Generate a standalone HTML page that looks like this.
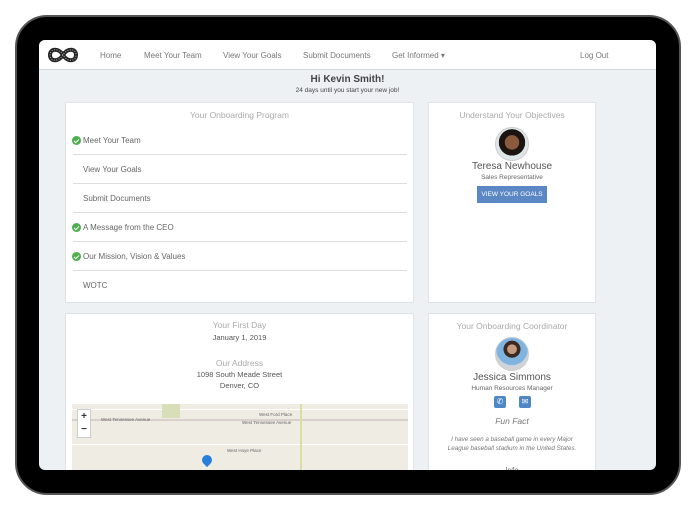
<!DOCTYPE html>
<html><head><meta charset="utf-8"><style>
*{box-sizing:border-box;margin:0;padding:0}
body{width:700px;height:511px;background:#fff;position:relative;overflow:hidden;font-family:"Liberation Sans",sans-serif;color:#555}
.frame{position:absolute;left:15px;top:15px;width:666px;height:480px;background:#000;border-radius:32px;border:2px solid #555}
.screen{position:absolute;left:39px;top:40px;width:617px;height:430px;background:#edf1f4;border-radius:6px;overflow:hidden}
.nav{position:absolute;left:0;top:0;width:617px;height:30px;background:#fff;border-bottom:1px solid #d5d8db;font-size:8px;color:#777}
.nav span{position:absolute;top:11px}
.card{position:absolute;background:#fff;border:1px solid #dfe3e6}
.t{position:absolute;width:100%;text-align:center;color:#aaa;font-size:8.5px}
.row{position:absolute;left:7px;width:334px;height:29px;border-bottom:1px solid #ddd;font-size:8px;color:#666}
.row span{position:absolute;left:10px;top:10px}
.ck{position:absolute;left:-1px;top:10px;width:9px;height:9px;border-radius:50%;background:#4cae4c}
.ck:after{content:"";position:absolute;left:3px;top:1.5px;width:2px;height:4px;border:solid #fff;border-width:0 1.5px 1.5px 0;transform:rotate(45deg)}
.c{position:absolute;width:100%;text-align:center}
</style></head><body>
<div class="frame"></div>
<div class="screen">
 <div class="nav">
  <svg style="position:absolute;left:8px;top:5px" width="32" height="20" viewBox="0 0 32 20"><path d="M16 10C12 3 3 3 3 10s9 7 13 0 13-7 13 0-9 7-13 0z" fill="none" stroke="#222" stroke-width="4"/><path d="M16 10C12 3 3 3 3 10s9 7 13 0 13-7 13 0-9 7-13 0z" fill="none" stroke="#bbb" stroke-width="1" stroke-dasharray="1 1.5"/></svg>
  <span style="left:61px">Home</span><span style="left:105px">Meet Your Team</span><span style="left:184px">View Your Goals</span><span style="left:264px">Submit Documents</span><span style="left:353px">Get Informed ▾</span><span style="left:541px">Log Out</span>
 </div>
 <div class="c" style="top:34px;font-size:10px;font-weight:bold;color:#444">Hi Kevin Smith!</div>
 <div class="c" style="top:47px;font-size:6.5px;color:#444">24 days until you start your new job!</div>

 <div class="card" style="left:26px;top:62px;width:349px;height:201px">
  <div class="t" style="top:7px">Your Onboarding Program</div>
  <div class="row" style="top:23px"><i class="ck"></i><span>Meet Your Team</span></div>
  <div class="row" style="top:52px"><span>View Your Goals</span></div>
  <div class="row" style="top:81px"><span>Submit Documents</span></div>
  <div class="row" style="top:110px"><i class="ck"></i><span>A Message from the CEO</span></div>
  <div class="row" style="top:139px"><i class="ck"></i><span>Our Mission, Vision &amp; Values</span></div>
  <div class="row" style="top:168px;border:none"><span>WOTC</span></div>
 </div>

 <div class="card" style="left:389px;top:62px;width:168px;height:201px">
  <div class="t" style="top:7px">Understand Your Objectives</div>
  <div style="position:absolute;left:66px;top:24px;width:34px;height:34px;border-radius:50%;background:radial-gradient(circle at 50% 45%,#8a5a3c 0 30%,#1c1410 31% 55%,#dfe6ea 56%);border:1px solid #ccc"></div>
  <div class="c" style="top:58px;font-size:10px;color:#555">Teresa Newhouse</div>
  <div class="c" style="top:71px;font-size:6.5px;color:#666">Sales Representative</div>
  <div style="position:absolute;left:48px;top:83px;width:70px;height:17px;background:#5b87c4;color:#fff;font-size:6.5px;text-align:center;line-height:17px">VIEW YOUR GOALS</div>
 </div>

 <div class="card" style="left:26px;top:273px;width:349px;height:170px">
  <div class="t" style="top:6px">Your First Day</div>
  <div class="c" style="top:19px;font-size:7.5px;color:#555">January 1, 2019</div>
  <div class="t" style="top:44px">Our Address</div>
  <div class="c" style="top:56px;font-size:7.5px;color:#555">1098 South Meade Street</div>
  <div class="c" style="top:67px;font-size:7.5px;color:#555">Denver, CO</div>
  <div style="position:absolute;left:6px;top:90px;width:336px;height:80px;background:#efece4;overflow:hidden">
   <div style="position:absolute;left:0;top:15px;width:336px;height:2px;background:#d9cfcc"></div>
   <div style="position:absolute;left:0;top:5px;width:336px;height:1px;background:#fff"></div>
   <div style="position:absolute;left:0;top:40px;width:336px;height:1px;background:#fff"></div>
   <div style="position:absolute;left:228px;top:0;width:2px;height:80px;background:#d7dfa4"></div>
   <div style="position:absolute;left:90px;top:0;width:18px;height:14px;background:#d8dfb8"></div>
   <div style="position:absolute;left:5px;top:5px;width:14px;height:29px;background:#fff;border:1px solid #ccc;font-size:10px;font-weight:bold;color:#333;text-align:center;line-height:13px">+<br>−</div>
   <div style="position:absolute;left:29px;top:13px;font-size:4.5px;color:#666">West Tennessee Avenue</div>
   <div style="position:absolute;left:187px;top:8px;font-size:4.5px;color:#666">West Ford Place</div>
   <div style="position:absolute;left:170px;top:16px;font-size:4.5px;color:#666">West Tennessee Avenue</div>
   <div style="position:absolute;left:155px;top:44px;font-size:4.5px;color:#666">West Hoye Place</div>
   <div style="position:absolute;left:130px;top:51px;width:10px;height:10px;border-radius:50% 50% 50% 0;transform:rotate(-45deg);background:#2a7fd8"></div>
  </div>
 </div>

 <div class="card" style="left:389px;top:273px;width:168px;height:170px">
  <div class="t" style="top:7px">Your Onboarding Coordinator</div>
  <div style="position:absolute;left:66px;top:23px;width:34px;height:34px;border-radius:50%;background:radial-gradient(circle at 50% 35%,#c49a80 0 18%,#3a2a20 19% 32%,#7fb3e0 33% 60%,#cfd4d8 61%);border:1px solid #ccc"></div>
  <div class="c" style="top:58px;font-size:10px;color:#555">Jessica Simmons</div>
  <div class="c" style="top:71px;font-size:6.5px;color:#666">Human Resources Manager</div>
  <div style="position:absolute;left:65px;top:82px;width:12px;height:12px;background:#4f86c6;border-radius:2px;color:#fff;font-size:8px;text-align:center;line-height:12px">✆</div>
  <div style="position:absolute;left:90px;top:82px;width:12px;height:12px;background:#4f86c6;border-radius:2px;color:#fff;font-size:8px;text-align:center;line-height:12px">✉</div>
  <div class="c" style="top:102px;font-size:8.5px;font-style:italic;color:#777">Fun Fact</div>
  <div class="c" style="top:121px;font-size:6.3px;font-style:italic;color:#777;line-height:9px">I have seen a baseball game in every Major<br>League baseball stadium in the United States.</div>
  <div class="c" style="top:152px;font-size:8px;color:#777">Info</div>
 </div>
</div>
</body></html>
